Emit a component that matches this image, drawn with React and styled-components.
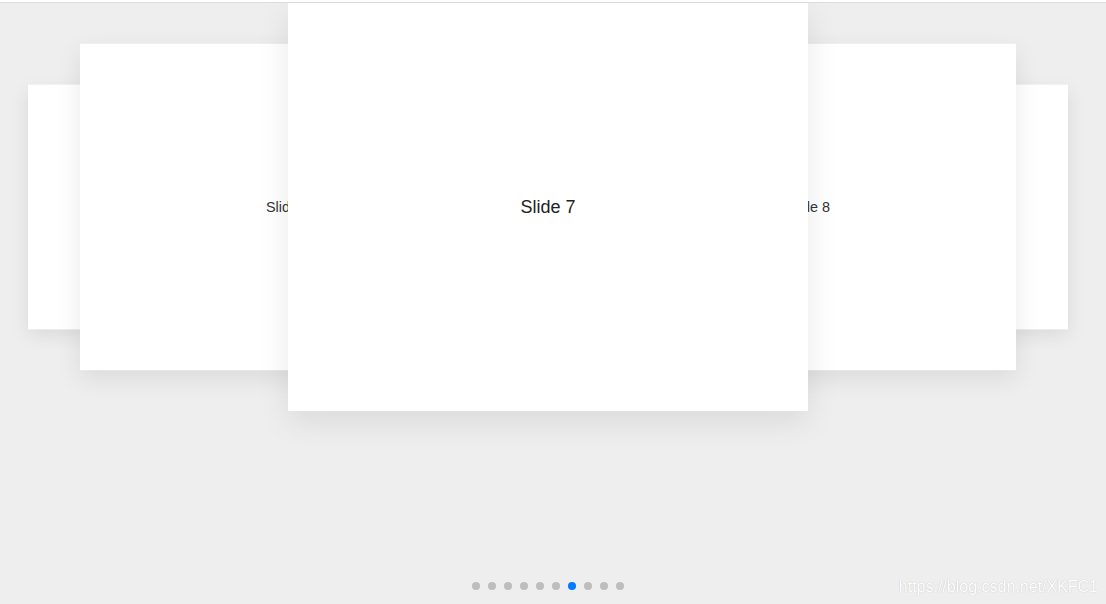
import React from "react";
import styled, { createGlobalStyle } from "styled-components";

const Global = createGlobalStyle`
  html, body { margin: 0; padding: 0; background: #fff; }
  body { font-family: "Liberation Sans", Arial, sans-serif; overflow: hidden; }
`;

const Page = styled.div`
  padding-top: 2px;
  width: 1106px;
  height: 604px;
  box-sizing: border-box;
`;

const Frame = styled.section`
  display: flex;
  flex-direction: column;
  height: 602px;
  box-sizing: border-box;
  border-top: 1px solid #dcdcdc;
  background: #eeeeee;
  overflow: hidden;
`;

const Stage = styled.div`
  display: grid;
  width: 1096px;
  height: 408px;
  justify-content: center;
  align-items: start;
`;

const Slide = styled.div`
  grid-area: 1 / 1;
  width: 520px;
  height: 408px;
  display: flex;
  align-items: center;
  justify-content: center;
  background: #fff;
  color: ${(p) => (p.$scale < 1 ? "#333" : "#222")};
  font-size: 18px;
  box-shadow: 0 10px 30px rgba(0, 0, 0, 0.085);
  transform-origin: center center;
  transform: translateX(${(p) => p.$offset}px) scale(${(p) => p.$scale});
  z-index: ${(p) => p.$z};
`;

const Footer = styled.div`
  position: relative;
  margin-top: auto;
  height: 32px;
  width: 1096px;
  display: flex;
  align-items: center;
  justify-content: center;
`;

const Bullets = styled.div`
  display: flex;
  margin-top: -4px;
`;

const Bullet = styled.span`
  width: 8px;
  height: 8px;
  margin: 0 4px;
  border-radius: 50%;
  background: ${(p) => (p.$active ? "#007aff" : "#bdbdbd")};
`;

const Watermark = styled.span`
  position: absolute;
  right: -2px;
  top: 6px;
  font-size: 16px;
  color: #fff;
  text-shadow: 0 0 1px rgba(0, 0, 0, 0.25);
  white-space: nowrap;
`;

const slides = [
  { n: 5, offset: -364, scale: 0.6, z: 1 },
  { n: 9, offset: 364, scale: 0.6, z: 1 },
  { n: 6, offset: -260, scale: 0.8, z: 2 },
  { n: 8, offset: 260, scale: 0.8, z: 2 },
  { n: 7, offset: 0, scale: 1, z: 3 },
];

export default function App() {
  return (
    <>
      <Global />
      <Page>
        <Frame>
          <Stage>
            {slides.map((s) => (
              <Slide key={s.n} $offset={s.offset} $scale={s.scale} $z={s.z}>
                Slide {s.n}
              </Slide>
            ))}
          </Stage>
          <Footer>
            <Bullets>
              {Array.from({ length: 10 }, (_, i) => (
                <Bullet key={i} $active={i === 6} />
              ))}
            </Bullets>
            <Watermark>https://blog.csdn.net/XKFC1</Watermark>
          </Footer>
        </Frame>
      </Page>
    </>
  );
}
